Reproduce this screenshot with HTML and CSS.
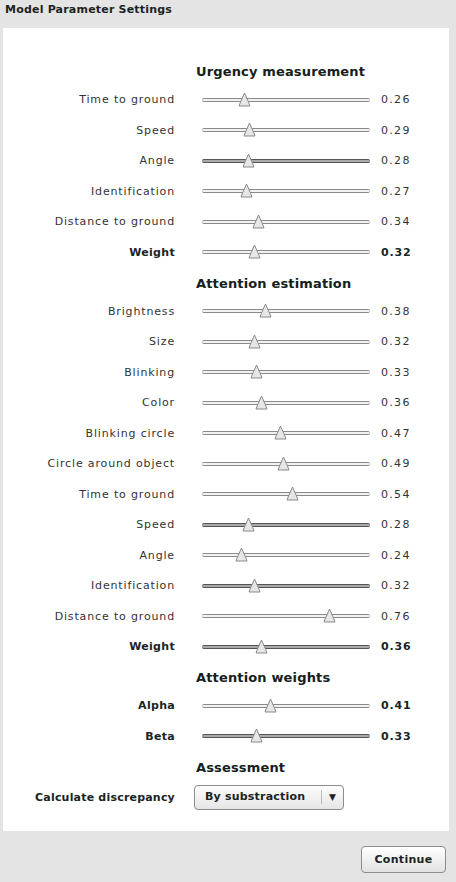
FILE: index.html
```html
<!DOCTYPE html>
<html>
<head>
<meta charset="utf-8">
<link rel="stylesheet" href="styles.css">
</head>
<body>
<div class="title">Model Parameter Settings</div>
<div class="panel">
  <div class="grid">
    <div class="head">Urgency measurement</div>
    <div class="label">Time to ground</div><div class="slider"><div class="track"></div><svg class="thumb" style="left:44.2px" viewBox="0 0 13 15"><path d="M6.5 1 L10.5 10 L12 14 L1 14 L2.5 10 Z"/></svg></div><div class="val">0.26</div>
    <div class="label">Speed</div><div class="slider"><div class="track"></div><svg class="thumb" style="left:49.3px" viewBox="0 0 13 15"><path d="M6.5 1 L10.5 10 L12 14 L1 14 L2.5 10 Z"/></svg></div><div class="val">0.29</div>
    <div class="label">Angle</div><div class="slider"><div class="track dark"></div><svg class="thumb" style="left:47.6px" viewBox="0 0 13 15"><path d="M6.5 1 L10.5 10 L12 14 L1 14 L2.5 10 Z"/></svg></div><div class="val">0.28</div>
    <div class="label">Identification</div><div class="slider"><div class="track"></div><svg class="thumb" style="left:45.9px" viewBox="0 0 13 15"><path d="M6.5 1 L10.5 10 L12 14 L1 14 L2.5 10 Z"/></svg></div><div class="val">0.27</div>
    <div class="label">Distance to ground</div><div class="slider"><div class="track"></div><svg class="thumb" style="left:57.8px" viewBox="0 0 13 15"><path d="M6.5 1 L10.5 10 L12 14 L1 14 L2.5 10 Z"/></svg></div><div class="val">0.34</div>
    <div class="label b">Weight</div><div class="slider"><div class="track"></div><svg class="thumb" style="left:54.4px" viewBox="0 0 13 15"><path d="M6.5 1 L10.5 10 L12 14 L1 14 L2.5 10 Z"/></svg></div><div class="val b">0.32</div>

    <div class="head">Attention estimation</div>
    <div class="label">Brightness</div><div class="slider"><div class="track"></div><svg class="thumb" style="left:64.6px" viewBox="0 0 13 15"><path d="M6.5 1 L10.5 10 L12 14 L1 14 L2.5 10 Z"/></svg></div><div class="val">0.38</div>
    <div class="label">Size</div><div class="slider"><div class="track"></div><svg class="thumb" style="left:54.4px" viewBox="0 0 13 15"><path d="M6.5 1 L10.5 10 L12 14 L1 14 L2.5 10 Z"/></svg></div><div class="val">0.32</div>
    <div class="label">Blinking</div><div class="slider"><div class="track"></div><svg class="thumb" style="left:56.1px" viewBox="0 0 13 15"><path d="M6.5 1 L10.5 10 L12 14 L1 14 L2.5 10 Z"/></svg></div><div class="val">0.33</div>
    <div class="label">Color</div><div class="slider"><div class="track"></div><svg class="thumb" style="left:61.2px" viewBox="0 0 13 15"><path d="M6.5 1 L10.5 10 L12 14 L1 14 L2.5 10 Z"/></svg></div><div class="val">0.36</div>
    <div class="label">Blinking circle</div><div class="slider"><div class="track"></div><svg class="thumb" style="left:79.9px" viewBox="0 0 13 15"><path d="M6.5 1 L10.5 10 L12 14 L1 14 L2.5 10 Z"/></svg></div><div class="val">0.47</div>
    <div class="label">Circle around object</div><div class="slider"><div class="track"></div><svg class="thumb" style="left:83.3px" viewBox="0 0 13 15"><path d="M6.5 1 L10.5 10 L12 14 L1 14 L2.5 10 Z"/></svg></div><div class="val">0.49</div>
    <div class="label">Time to ground</div><div class="slider"><div class="track"></div><svg class="thumb" style="left:91.8px" viewBox="0 0 13 15"><path d="M6.5 1 L10.5 10 L12 14 L1 14 L2.5 10 Z"/></svg></div><div class="val">0.54</div>
    <div class="label">Speed</div><div class="slider"><div class="track dark"></div><svg class="thumb" style="left:47.6px" viewBox="0 0 13 15"><path d="M6.5 1 L10.5 10 L12 14 L1 14 L2.5 10 Z"/></svg></div><div class="val">0.28</div>
    <div class="label">Angle</div><div class="slider"><div class="track"></div><svg class="thumb" style="left:40.8px" viewBox="0 0 13 15"><path d="M6.5 1 L10.5 10 L12 14 L1 14 L2.5 10 Z"/></svg></div><div class="val">0.24</div>
    <div class="label">Identification</div><div class="slider"><div class="track dark"></div><svg class="thumb" style="left:54.4px" viewBox="0 0 13 15"><path d="M6.5 1 L10.5 10 L12 14 L1 14 L2.5 10 Z"/></svg></div><div class="val">0.32</div>
    <div class="label">Distance to ground</div><div class="slider"><div class="track"></div><svg class="thumb" style="left:129.2px" viewBox="0 0 13 15"><path d="M6.5 1 L10.5 10 L12 14 L1 14 L2.5 10 Z"/></svg></div><div class="val">0.76</div>
    <div class="label b">Weight</div><div class="slider"><div class="track dark"></div><svg class="thumb" style="left:61.2px" viewBox="0 0 13 15"><path d="M6.5 1 L10.5 10 L12 14 L1 14 L2.5 10 Z"/></svg></div><div class="val b">0.36</div>

    <div class="head">Attention weights</div>
    <div class="label b">Alpha</div><div class="slider"><div class="track"></div><svg class="thumb" style="left:69.7px" viewBox="0 0 13 15"><path d="M6.5 1 L10.5 10 L12 14 L1 14 L2.5 10 Z"/></svg></div><div class="val b">0.41</div>
    <div class="label b">Beta</div><div class="slider"><div class="track dark"></div><svg class="thumb" style="left:56.1px" viewBox="0 0 13 15"><path d="M6.5 1 L10.5 10 L12 14 L1 14 L2.5 10 Z"/></svg></div><div class="val b">0.33</div>

    <div class="head">Assessment</div>
    <div class="label b tall">Calculate discrepancy</div>
    <div class="selectcell">
      <div class="select"><span class="seltext">By substraction</span><span class="arrow">▼</span></div>
    </div>
  </div>
</div>
<div class="footer"><button class="btn">Continue</button></div>
</body>
</html>
```
FILE: styles.css
```css
html, body {
  margin: 0;
  padding: 0;
}
body {
  background: #e4e4e4;
  font-family: "DejaVu Sans", Verdana, sans-serif;
  color: #1c2626;
  width: 456px;
  height: 882px;
  overflow: hidden;
}
.title {
  font-size: 11px;
  font-weight: bold;
  height: 28px;
  line-height: 20px;
  padding-left: 5px;
  color: #1a2424;
  letter-spacing: 0.2px;
}
.panel {
  background: #ffffff;
  margin: 0 7px 0 3px;
  padding: 28px 0 0 0;
  height: 775px;
}
.grid {
  display: grid;
  grid-template-columns: 171px 182px 1fr;
  column-gap: 0;
}
.grid > .slider { margin-left: 20px; }
.grid > .val { margin-left: 25px; }
.head {
  grid-column: 2 / 4;
  margin-left: 22px;
  font-size: 13px;
  font-weight: bold;
  height: 28.5px;
  line-height: 17px;
  padding-top: 7px;
  box-sizing: border-box;
  color: #142020;
  letter-spacing: 0.15px;
}
.label, .slider, .val {
  height: 30.5px;
}
.label {
  font-size: 11px;
  color: #333;
  text-align: right;
  display: flex;
  align-items: center;
  justify-content: flex-end;
  letter-spacing: 0.85px;
  margin-right: -1px;
}
.val {
  font-size: 11px;
  color: #333;
  display: flex;
  align-items: center;
  letter-spacing: 1.3px;
}
.b {
  font-weight: bold;
  color: #1a2424;
  letter-spacing: 0.3px;
}
.val.b {
  letter-spacing: 0.8px;
}
.slider {
  position: relative;
  display: flex;
  align-items: center;
  width: 182px;
}
.track {
  height: 2px;
  margin: 0 6px 0 8px;
  flex: 1;
  border-top: 1px solid #8a8a8a;
  border-bottom: 1px solid #8a8a8a;
  background: #f2f2f2;
  border-radius: 2px;
}
.track.dark {
  border-top-color: #555;
  border-bottom-color: #555;
  background: #aaa;
}
.thumb {
  position: absolute;
  top: 7px;
  width: 13px;
  height: 15px;
}
.thumb path {
  fill: #e6e6e6;
  stroke: #8a8a8a;
  stroke-width: 1;
  stroke-linejoin: round;
}
.grid > .tall {
  height: 34px;
  letter-spacing: 0.2px;
}
.selectcell {
  grid-column: 2 / 4;
  margin-left: 20px;
  display: flex;
  align-items: center;
  height: 34px;
}
.select {
  width: 150px;
  height: 25px;
  box-sizing: border-box;
  border: 1px solid #8c8c8c;
  border-radius: 4px;
  background: linear-gradient(#fdfdfd, #e6e6e6);
  display: flex;
  align-items: center;
  font-size: 11px;
  font-weight: bold;
  color: #1a2424;
}
.seltext {
  padding-left: 10px;
  width: 127px;
  box-sizing: border-box;
  letter-spacing: 0.2px;
  border-right: 1px solid #bbb;
  line-height: 14px;
}
.arrow {
  flex: 1;
  text-align: center;
  font-size: 9px;
  color: #222;
}
.footer {
  display: flex;
  justify-content: flex-end;
  padding: 15px 10px 0 0;
}
.btn {
  width: 85px;
  height: 27px;
  border: 1px solid #8c8c8c;
  border-radius: 4px;
  background: linear-gradient(#ffffff, #e2e2e2);
  font-family: "DejaVu Sans", Verdana, sans-serif;
  font-size: 11px;
  font-weight: bold;
  color: #1a2424;
  letter-spacing: 0.3px;
  padding: 0;
}
```
